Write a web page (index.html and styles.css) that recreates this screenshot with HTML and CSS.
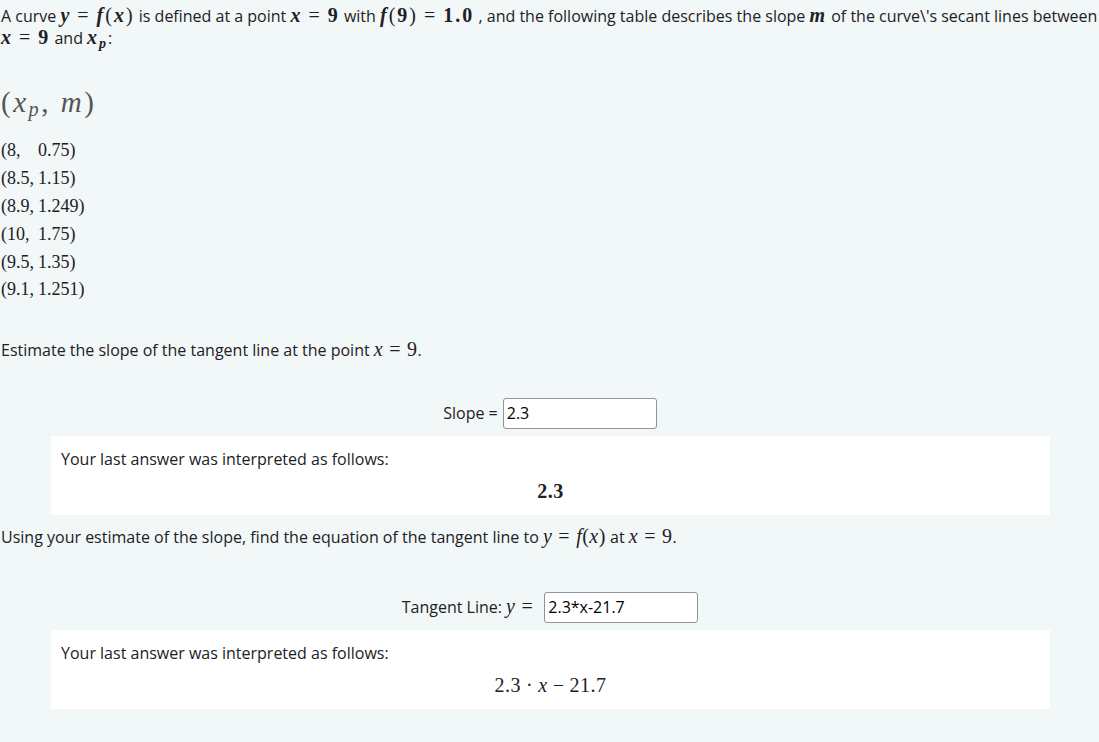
FILE: index.html
```html
<!DOCTYPE html>
<html>
<head>
<meta charset="utf-8">
<link rel="stylesheet" href="styles.css">
</head>
<body>
<div class="question">
  <p class="intro">A curve <span class="mx"><i class="bi">y</i><span class="op">=</span><i class="bi">f</i>(<i class="bi">x</i>)</span> is defined at a point <span class="mx"><i class="bi">x</i><span class="op">=</span><b>9</b></span> with <span class="mx"><i class="bi">f</i>(<b>9</b>)<span class="op">=</span><b>1.0</b></span> , and the following table describes the slope <span class="mx"><i class="bi">m</i></span> of the curve\'s secant lines between<br><span class="mx"><i class="bi">x</i><span class="op">=</span><b>9</b></span> and <span class="mx"><i class="bi">x</i><sub class="bi">p</sub></span>:</p>

  <div class="thead"><span class="mx">(<i>x</i><sub><i>p</i></sub>, <i>m</i>)</span></div>

  <div class="table">
    <div class="row"><span class="c1">(8,</span><span>0.75)</span></div>
    <div class="row"><span class="c1">(8.5,</span><span>1.15)</span></div>
    <div class="row"><span class="c1">(8.9,</span><span>1.249)</span></div>
    <div class="row"><span class="c1">(10,</span><span>1.75)</span></div>
    <div class="row"><span class="c1">(9.5,</span><span>1.35)</span></div>
    <div class="row"><span class="c1">(9.1,</span><span>1.251)</span></div>
  </div>

  <p class="task">Estimate the slope of the tangent line at the point <span class="mx"><i>x</i><span class="op">=</span>9</span>.</p>

  <div class="answer">
    <label class="lbl">Slope =</label>
    <span class="field">2.3</span>
  </div>

  <div class="feedback">
    <p class="fb-text">Your last answer was interpreted as follows:</p>
    <div class="fb-math"><span class="mx"><b>2.3</b></span></div>
  </div>

  <p class="task2">Using your estimate of the slope, find the equation of the tangent line to <span class="mx"><i>y</i><span class="op">=</span><i>f</i>(<i>x</i>)</span> at <span class="mx"><i>x</i><span class="op">=</span>9</span>.</p>

  <div class="answer answer2">
    <label class="lbl">Tangent Line: <span class="mx"><i>y</i><span class="op">=</span></span></label>
    <span class="field">2.3*x-21.7</span>
  </div>

  <div class="feedback">
    <p class="fb-text">Your last answer was interpreted as follows:</p>
    <div class="fb-math"><span class="mx">2.3<span class="bin">·</span><i>x</i><span class="bin">−</span>21.7</span></div>
  </div>
</div>
</body>
</html>
```

FILE: styles.css
```css
html, body {
  margin: 0;
  padding: 0;
  background: #f2f7f7;
}
body {
  font-family: "Open Sans", "Noto Sans", sans-serif;
  font-size: 16px;
  color: #1d2125;
}
.question {
  padding: 5px 0 0 1px;
}
p { margin: 0; }
.intro {
  line-height: 22px;
  white-space: nowrap;
}
.mx {
  font-family: "Liberation Serif", "DejaVu Serif", serif;
  font-size: 20px;
  line-height: 1;
  letter-spacing: 0.5px;
}
.intro .mx { letter-spacing: 2px; }
.mx i { font-style: italic; }
.mx b { font-weight: bold; }
.bi { font-weight: bold; font-style: italic; }
.op { margin: 0 6px; }
.bin { margin: 0 5px; }
sub { font-size: 70%; vertical-align: -4px; line-height: 0; }
.thead {
  margin-top: 37px;
  color: #555;
  line-height: 32px;
}
.thead .mx { font-size: 29px; letter-spacing: 2.5px; line-height: 32px; }
.table {
  margin-top: 15px;
}
.row {
  display: flex;
  height: 27.8px;
  align-items: center;
  font-family: "Liberation Serif", serif;
  font-size: 18px;
}
.c1 { width: 37px; }
.task {
  margin-top: 35px;
  line-height: 22px;
}
.answer {
  display: flex;
  justify-content: center;
  align-items: center;
  gap: 5px;
  margin-top: 37px;
}
.field {
  box-sizing: border-box;
  width: 154px;
  height: 31px;
  border: 1px solid #8f959e;
  border-radius: 3px;
  background: #fff;
  padding: 3px 3px 0;
  font-size: 16px;
  color: #000;
}
.feedback {
  background: #fff;
  margin: 7px 49px 0 50px;
  height: 79px;
  box-sizing: border-box;
  padding: 12px 10px 0;
}
.fb-text { line-height: 22px; }
.fb-math {
  text-align: center;
  margin-top: 11px;
}
.task2 {
  margin-top: 11px;
  line-height: 22px;
}
.answer2 { margin-top: 44px; }
```
